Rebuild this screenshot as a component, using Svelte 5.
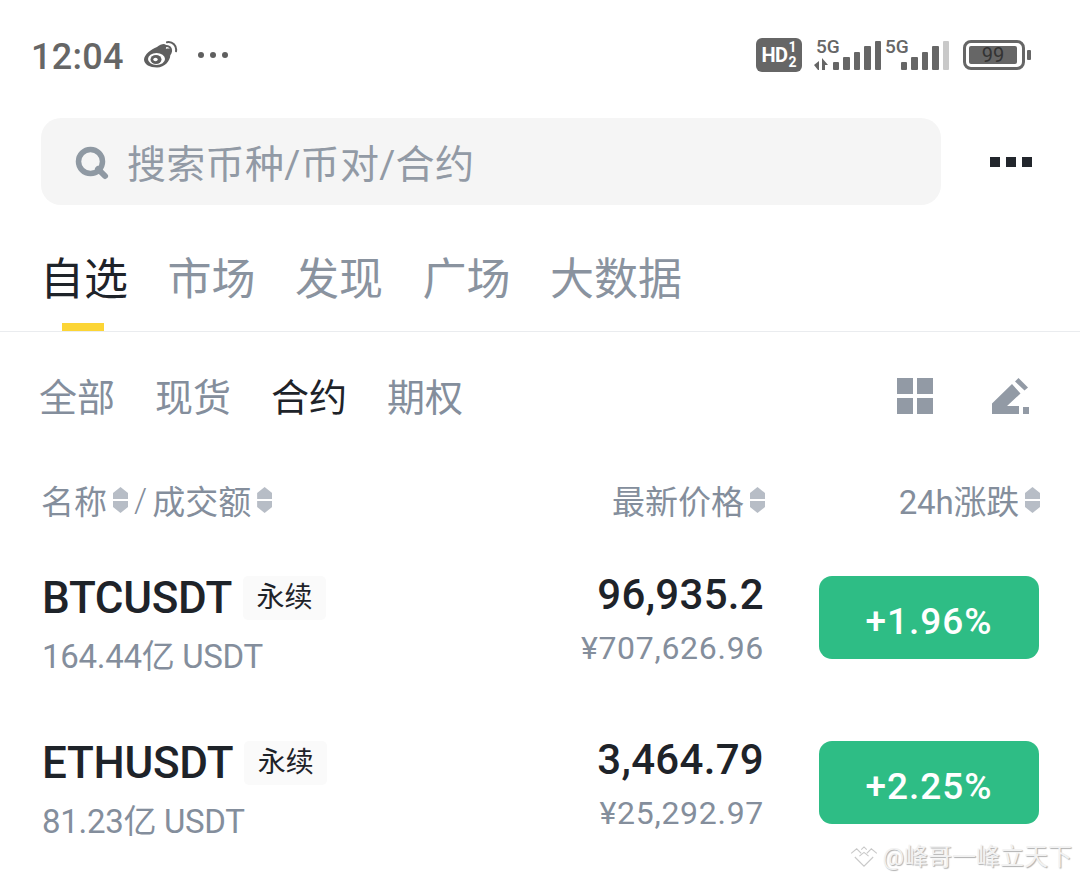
<script>
  const tabs = ["自选", "市场", "发现", "广场", "大数据"];
  const subTabs = ["全部", "现货", "合约", "期权"];
  const rows = [
    { name: "BTCUSDT", vol: "164.44亿 USDT", price: "96,935.2", cny: "¥707,626.96", pct: "+1.96%" },
    { name: "ETHUSDT", vol: "81.23亿 USDT", price: "3,464.79", cny: "¥25,292.97", pct: "+2.25%" }
  ];
  const bars = [8, 13, 18, 24, 29];
</script>

<div class="page">
  <header class="status">
    <div class="status-left">
      <span class="clock">12:04</span>
      <svg class="weibo" width="34" height="27" viewBox="0 0 34 27">
        <path fill="#5f5f5f" d="M13 6c3-2.500 7-3.800 8.500-2.500 1.200 1 .8 3 .3 4.500 2.500-.8 5.500-.6 6 1.800.4 1.800-.6 3.300-1.500 4.500C26 20 21 26.500 13 26.500 6 26.500 0 23.500 0 18.500 0 14 7 8 13 6z"/>
        <ellipse cx="12.500" cy="18" rx="8.500" ry="6" fill="#fff"/>
        <ellipse cx="12" cy="18.500" rx="5.500" ry="4.500" fill="#5f5f5f"/>
        <ellipse cx="11.500" cy="18.500" rx="2.200" ry="1.800" fill="#fff"/>
        <path fill="none" stroke="#5f5f5f" stroke-width="2" stroke-linecap="round" d="M22 5c3-.5 5.500 2 5 5M23 1.200c5.500-1 10 3.500 9 9"/>
      </svg>
      <svg class="dots" width="30" height="8" viewBox="0 0 30 8">
        <circle cx="3" cy="4" r="3" fill="#5f5f5f"/>
        <circle cx="15" cy="4" r="3" fill="#5f5f5f"/>
        <circle cx="27" cy="4" r="3" fill="#5f5f5f"/>
      </svg>
    </div>
    <div class="status-right">
      <span class="hd"><b>HD</b><span class="hd-nums"><i>1</i><i>2</i></span></span>
      <div class="signal first">
        <span class="five">5G</span>
        <svg width="67" height="12" viewBox="0 0 67 12">
          <path fill="#666" d="M0 7l5-4v9H4zM8 0l6 7h-3v5H8z"/>
        </svg>
        <div class="bars">
          {#each bars as h}
            <i style="height:{h}px"></i>
          {/each}
        </div>
      </div>
      <div class="signal second">
        <span class="five">5G</span>
        <div class="bars">
          {#each bars as h, i}
            <i class:off={i === 4} style="height:{h}px"></i>
          {/each}
        </div>
      </div>
      <div class="battery"><span class="cell">99</span></div>
      <span class="cap"></span>
    </div>
  </header>

  <div class="search-row">
    <div class="search">
      <svg width="36" height="36" viewBox="0 0 36 36">
        <circle cx="16.500" cy="16.500" r="12" fill="none" stroke="#8f99a3" stroke-width="5.500"/>
        <path d="M24 24l7 7" stroke="#8f99a3" stroke-width="6" stroke-linecap="round"/>
      </svg>
      <span>搜索币种/币对/合约</span>
    </div>
    <div class="more"><i></i><i></i><i></i></div>
  </div>

  <nav class="tabs">
    {#each tabs as t, i}
      <span class="tab" class:active={i === 0}>{t}</span>
    {/each}
  </nav>

  <div class="subbar">
    <div class="subtabs">
      {#each subTabs as t, i}
        <span class:on={i === 2}>{t}</span>
      {/each}
    </div>
    <div class="tools">
      <svg width="38" height="38" viewBox="0 0 38 38">
        <rect x="1" y="1" width="16" height="16" fill="#929aa5"/>
        <rect x="21" y="1" width="16" height="16" fill="#929aa5"/>
        <rect x="1" y="21" width="16" height="16" fill="#929aa5"/>
        <rect x="21" y="21" width="16" height="16" fill="#929aa5"/>
      </svg>
      <svg width="38" height="38" viewBox="0 0 38 38">
        <path fill="#929aa5" d="M0 37V26.500L20 7l8.500 9.500L15 29h12v8z"/>
        <path fill="#929aa5" d="M23 4.500l3.500-3.500 9.500 9.500-3.500 3z"/>
        <rect x="31" y="30" width="6" height="7" fill="#929aa5"/>
      </svg>
    </div>
  </div>

  <div class="columns">
    <div class="col-left">
      <span>名称</span>
      <span class="sort"></span>
      <span class="slash">/</span>
      <span>成交额</span>
      <span class="sort"></span>
    </div>
    <div class="col-price">
      <span>最新价格</span>
      <span class="sort"></span>
    </div>
    <div class="col-pct">
      <span>24h涨跌</span>
      <span class="sort"></span>
    </div>
  </div>

  {#each rows as r}
    <div class="row">
      <div class="info">
        <div class="symbol">
          <span class="name">{r.name}</span>
          <span class="tag">永续</span>
        </div>
        <div class="vol">{r.vol}</div>
      </div>
      <div class="prices">
        <div class="price">{r.price}</div>
        <div class="cny">{r.cny}</div>
      </div>
      <div class="pct">{r.pct}</div>
    </div>
  {/each}

  <div class="watermark">
    <svg width="28" height="22" viewBox="0 0 30 24" fill="none" stroke="#c9c9c9" stroke-width="1.200">
      <path d="M1 8l6-5 5 5M12 4l3-3 3 3M18 8l5-5 6 5M5 12l10 10 10-10M10 11l5-4 5 4"/>
    </svg>
    <span>@峰哥一峰立天下</span>
  </div>
</div>

<style>
  :global(body) {
    margin: 0;
    background: #fff;
  }

  .page {
    position: relative;
    width: 1080px;
    height: 879px;
    overflow: hidden;
    font-family: Roboto, "Noto Sans CJK SC", sans-serif;
    background: #fff;
  }

  .status {
    height: 118px;
    box-sizing: border-box;
    padding: 36px 49px 0 31px;
    display: flex;
    justify-content: space-between;
    align-items: flex-start;
  }

  .status-left {
    display: flex;
    align-items: center;
    gap: 20px;
    color: #666;
  }

  .clock {
    font-size: 36px;
    font-weight: 500;
    line-height: 42px;
    letter-spacing: 0.3px;
  }

  .dots {
    margin-top: -4px;
  }

  .weibo {
    margin: -5px 0 0 0;
  }

  .status-right {
    display: flex;
    align-items: flex-start;
    padding-top: 1px;
  }

  .hd {
    width: 46px;
    height: 34px;
    margin-top: 1px;
    background: #666;
    border-radius: 6px;
    color: #fff;
    display: flex;
    align-items: center;
    justify-content: center;
    gap: 1px;
    font-size: 20px;
    margin-right: 12px;
  }

  .hd b {
    font-weight: 700;
    letter-spacing: -0.5px;
  }

  .hd-nums {
    display: flex;
    flex-direction: column;
    font-size: 14px;
    font-weight: 700;
    line-height: 15px;
  }

  .hd-nums i {
    font-style: normal;
  }

  .signal {
    position: relative;
    height: 33px;
    width: 67px;
  }

  .signal svg {
    position: absolute;
    left: 0;
    bottom: 0;
  }

  .signal.second {
    width: 62px;
    margin: 0 14px 0 6px;
  }

  .bars {
    position: absolute;
    right: 0;
    bottom: 0;
    display: flex;
    align-items: flex-end;
    gap: 4px;
  }

  .bars i {
    width: 6.500px;
    background: #666;
    border-radius: 1px;
  }

  .bars i.off {
    background: #c9c9c9;
  }

  .five {
    position: absolute;
    left: 2px;
    top: 0;
    font-size: 19px;
    font-weight: 500;
    color: #666;
    line-height: 19px;
  }

  .second .five {
    left: -2px;
  }

  .battery {
    width: 62px;
    height: 30px;
    box-sizing: border-box;
    border: 3px solid #666;
    border-radius: 8px;
    padding: 3px;
    margin-top: 3px;
  }

  .cell {
    display: block;
    height: 18px;
    background: #666;
    border-radius: 2px;
    color: #333;
    font-size: 20px;
    line-height: 19px;
    text-align: center;
    width: 48px;
  }

  .cap {
    width: 4px;
    height: 10px;
    background: #666;
    border-radius: 1px;
    margin: 13px 0 0 2px;
  }

  .search-row {
    display: flex;
    align-items: center;
    padding-left: 41px;
  }

  .search {
    width: 900px;
    height: 87px;
    box-sizing: border-box;
    background: #f5f5f5;
    border-radius: 20px;
    display: flex;
    align-items: center;
    gap: 17px;
    padding-left: 33px;
    color: #929aa5;
    font-size: 39px;
    letter-spacing: 0.3px;
  }

  .search svg {
    flex: none;
    margin-top: 2px;
  }

  .search span {
    margin-top: -2px;
  }

  .more {
    display: flex;
    gap: 6px;
    margin-left: 49px;
  }

  .more i {
    width: 10px;
    height: 10px;
    background: #22262c;
  }

  .tabs {
    height: 127px;
    box-sizing: border-box;
    border-bottom: 1px solid #eaecef;
    padding: 44px 0 0 40px;
    display: flex;
    gap: 39.500px;
  }

  .tab {
    position: relative;
    font-size: 44px;
    line-height: 62px;
    color: #8a939f;
    height: 82px;
  }

  .tab.active {
    color: #1e2329;
  }

  .tab.active::after {
    content: "";
    position: absolute;
    left: 22px;
    bottom: 0;
    width: 42px;
    height: 8px;
    background: #fcd535;
  }

  .subbar {
    height: 128px;
    box-sizing: border-box;
    padding: 0 50px 0 39px;
    display: flex;
    justify-content: space-between;
    align-items: center;
  }

  .subtabs {
    display: flex;
    gap: 40px;
    font-size: 38px;
    color: #848e9c;
    margin-bottom: 4px;
  }

  .subtabs .on {
    color: #1e2329;
  }

  .tools {
    display: flex;
    gap: 58px;
  }

  .columns {
    display: flex;
    align-items: center;
    height: 36px;
    margin: 22px 0 18px;
    font-size: 33px;
    color: #848e9c;
    padding: 0 40px 0 41px;
  }

  .col-left,
  .col-price,
  .col-pct {
    display: flex;
    align-items: center;
  }

  .col-left {
    width: 571px;
  }

  .col-price {
    width: 153px;
    justify-content: flex-end;
    margin-right: auto;
  }

  .col-pct {
    letter-spacing: -0.2px;
  }

  .slash {
    margin: 0 5px 0 6px;
    font-weight: 300;
  }

  .sort {
    position: relative;
    width: 15px;
    height: 28px;
    margin-left: 6px;
    flex: none;
  }

  .sort::before,
  .sort::after {
    content: "";
    position: absolute;
    left: 0;
    width: 15px;
    height: 12px;
    background: #b7bdc6;
  }

  .sort::before {
    top: 1px;
    clip-path: polygon(50% 0, 100% 50%, 100% 100%, 0 100%, 0 50%);
  }

  .sort::after {
    bottom: 1px;
    clip-path: polygon(0 0, 100% 0, 100% 50%, 50% 100%, 0 50%);
  }

  .row {
    height: 165px;
    box-sizing: border-box;
    padding: 40px 41px 0 42px;
    display: flex;
    align-items: flex-start;
  }

  .info {
    width: 460px;
  }

  .symbol {
    display: flex;
    align-items: center;
    gap: 11px;
    height: 44px;
  }

  .name {
    font-size: 44px;
    font-weight: 500;
    color: #1e2329;
    letter-spacing: -0.3px;
  }

  .tag {
    width: 83px;
    height: 44px;
    background: #fafafa;
    border-radius: 5px;
    font-size: 28px;
    line-height: 44px;
    text-align: center;
    color: #1e2329;
  }

  .vol {
    font-size: 33px;
    color: #848e9c;
    margin-top: 17px;
    line-height: 40px;
    letter-spacing: -0.3px;
  }

  .prices {
    width: 262px;
    text-align: right;
  }

  .price {
    font-size: 42px;
    font-weight: 500;
    color: #1e2329;
    line-height: 44px;
    letter-spacing: 0.3px;
    margin-top: -3px;
  }

  .cny {
    font-size: 32px;
    color: #848e9c;
    margin-top: 11px;
    line-height: 40px;
    letter-spacing: 0.7px;
  }

  .pct {
    width: 220px;
    height: 83px;
    margin-left: auto;
    background: #2ebd85;
    border-radius: 13px;
    color: #fff;
    font-size: 37px;
    font-weight: 500;
    line-height: 91px;
    text-align: center;
    letter-spacing: 1px;
  }

  .watermark {
    position: absolute;
    right: 8px;
    bottom: 6px;
    display: flex;
    align-items: center;
    gap: 4px;
    font-size: 24px;
    line-height: 32px;
    color: #f2f2f2;
    text-shadow: 1px 1px 1px #b0b0b0;
  }
</style>
